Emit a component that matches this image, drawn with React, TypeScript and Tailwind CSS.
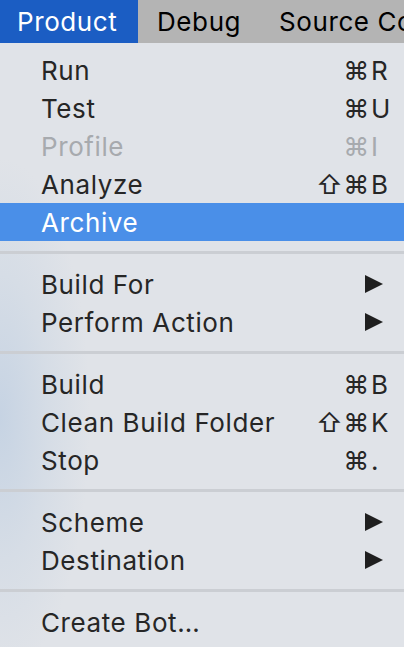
import React from "react";

type Item =
  | { type: "sep" }
  | {
      type: "item";
      label: string;
      mods?: string;
      key?: string;
      submenu?: boolean;
      disabled?: boolean;
      active?: boolean;
    };

const items: Item[] = [
  { type: "item", label: "Run", mods: "⌘", key: "R" },
  { type: "item", label: "Test", mods: "⌘", key: "U" },
  { type: "item", label: "Profile", mods: "⌘", key: "I", disabled: true },
  { type: "item", label: "Analyze", mods: "⇧⌘", key: "B" },
  { type: "item", label: "Archive", active: true },
  { type: "sep" },
  { type: "item", label: "Build For", submenu: true },
  { type: "item", label: "Perform Action", submenu: true },
  { type: "sep" },
  { type: "item", label: "Build", mods: "⌘", key: "B" },
  { type: "item", label: "Clean Build Folder", mods: "⇧⌘", key: "K" },
  { type: "item", label: "Stop", mods: "⌘", key: "." },
  { type: "sep" },
  { type: "item", label: "Scheme", submenu: true },
  { type: "item", label: "Destination", submenu: true },
  { type: "sep" },
  { type: "item", label: "Create Bot…" },
];

function Triangle() {
  return (
    <svg width="18" height="18" viewBox="0 0 18 18" className="block">
      <polygon points="0,0 18,9 0,18" fill="#1f1f1f" />
    </svg>
  );
}

export default function App() {
  return (
    <div
      className="w-[404px] h-[647px] overflow-hidden flex flex-col tracking-[0.6px]"
      style={{ fontFamily: "Inter, 'DejaVu Sans', sans-serif" }}
    >
      <div className="h-[43px] bg-[#b4b4b4] flex items-center text-[26px] text-black shrink-0 overflow-hidden">
        <div className="h-full w-[138px] shrink-0 bg-[#1b5dc3] text-white flex items-center pl-[17px]">
          Product
        </div>
        <div className="pl-[19px] w-[141px] shrink-0">Debug</div>
        <div className="whitespace-nowrap">Source Control</div>
      </div>
      <div className="flex-1 bg-[#e0e3e8] bg-[radial-gradient(ellipse_90px_260px_at_0%_62%,#c6d3e3_0%,#d6dde6_55%,transparent_100%)] pt-[8px] text-[26px]">
        {items.map((it, i) =>
          it.type === "sep" ? (
            <div key={i} className="pt-[10px] pb-[11px]">
              <div className="h-[3px] bg-[#cbced3]" />
            </div>
          ) : (
            <div
              key={i}
              className={
                "h-[38px] flex items-center pl-[41px] " +
                (it.submenu ? "pr-[16px] " : "pr-[14px] ") +
                (it.active
                  ? "bg-[#4a8fe8] text-white"
                  : it.disabled
                  ? "text-[#a7aaae]"
                  : "text-[#262626]")
              }
            >
              <span className="flex-1 whitespace-nowrap">{it.label}</span>
              {it.submenu && (
                <span className="pr-[5px]">
                  <Triangle />
                </span>
              )}
              {it.key && (
                <span className="flex items-center">
                  <span className="text-right whitespace-nowrap">{it.mods}</span>
                  <span className="w-[20px] pl-[1px]">{it.key}</span>
                </span>
              )}
            </div>
          )
        )}
      </div>
    </div>
  );
}
